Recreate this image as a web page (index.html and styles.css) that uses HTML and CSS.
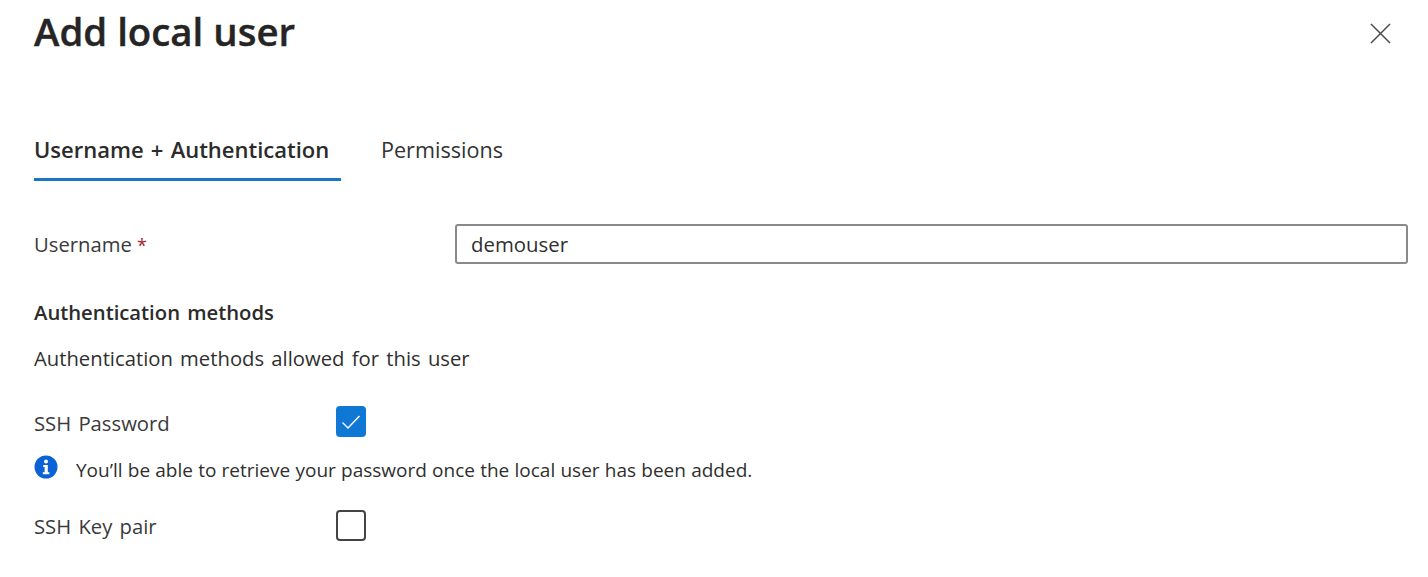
FILE: index.html
```html
<!DOCTYPE html>
<html lang="en">
<head>
<meta charset="utf-8">
<title>Add local user</title>
<link rel="stylesheet" href="styles.css">
</head>
<body>
<main class="panel">
  <header class="head">
    <h1 class="title">Add local user</h1>
    <button class="close" aria-label="Close">
      <svg width="21" height="21" viewBox="0 0 21 21"><path d="M1 1 L20 20 M20 1 L1 20" stroke="#4a4a4a" stroke-width="1.5" fill="none"/></svg>
    </button>
  </header>
  <nav class="tabs">
    <span class="tab active">Username + Authentication</span>
    <span class="tab">Permissions</span>
  </nav>
  <div class="field">
    <label class="field-label">Username <span class="req">*</span></label>
    <div class="input">demouser</div>
  </div>
  <h2 class="section">Authentication methods</h2>
  <p class="desc">Authentication methods allowed for this user</p>
  <div class="check-row">
    <span class="check-label">SSH Password</span>
    <span class="box checked">
      <svg width="20" height="16" viewBox="0 0 20 16"><path d="M1.5 8.5 L7 14 L18.5 2" stroke="#fff" stroke-width="1.4" fill="none"/></svg>
    </span>
  </div>
  <div class="info">
    <svg class="info-icon" width="24" height="24" viewBox="0 0 24 24"><circle cx="12" cy="12" r="11.5" fill="#0b62d6"/><circle cx="12" cy="6.6" r="2" fill="#fff"/><path d="M9.2 10h4.6v7.2h1.6v2H8.8v-2h1.8v-5.2H9.2z" fill="#fff"/></svg>
    <span class="info-text">You’ll be able to retrieve your password once the local user has been added.</span>
  </div>
  <div class="check-row second">
    <span class="check-label">SSH Key pair</span>
    <span class="box"></span>
  </div>
</main>
</body>
</html>
```
FILE: styles.css
```css
* { box-sizing: border-box; }
html, body { margin: 0; padding: 0; background: #fff; }
body { width: 1428px; height: 577px; overflow: hidden; font-family: "Open Sans", "Noto Sans", sans-serif; color: #2f2f2f; word-spacing: 2px; }
.panel { padding: 0 20px 0 34px; display: flex; flex-direction: column; }
.head { display: flex; justify-content: space-between; align-items: flex-start; height: 128px; }
.title { margin: 5px 0 0; font-size: 38.4px; line-height: 53px; font-weight: 600; color: #252525; word-spacing: 0; -webkit-text-stroke: 0.4px #252525; }
.close { margin: 23px 17px 0 0; padding: 0; border: 0; background: none; display: block; width: 21px; height: 21px; }
.tabs { display: flex; gap: 40px; height: 53px; }
.tab { font-size: 21.6px; line-height: 43px; color: #333; word-spacing: 0; }
.tab.active { font-size: 22px; font-weight: 600; border-bottom: 3px solid #1a75c2; width: 307px; height: 53px; line-height: 43px; color: #2b2b2b; word-spacing: 1.5px; }
.field { display: flex; align-items: center; margin-top: 43px; height: 40px; }
.field-label { width: 421px; font-size: 20.25px; color: #3a3a3a; word-spacing: 0; }
.req { color: #a4262c; font-size: 18px; }
.input { flex: 1; height: 40px; border: 2px solid #8a8a8a; border-radius: 3px; padding-left: 14px; font-size: 20.4px; line-height: 37px; color: #2f2f2f; }
.section { margin: 33px 0 0; font-size: 20.25px; line-height: 30px; font-weight: 600; color: #2b2b2b; }
.desc { margin: 16px 0 0; font-size: 20.25px; line-height: 30px; }
.check-row { display: flex; align-items: center; height: 31px; margin-top: 33px; }
.check-label { width: 302px; font-size: 20.25px; line-height: 33px; padding-top: 3px; color: #3a3a3a; }
.box { width: 30px; height: 31px; border: 2px solid #444; border-radius: 4px; display: flex; align-items: center; justify-content: center; }
.box.checked { background: #0f78d4; border: 0; }
.info { display: flex; align-items: flex-start; margin-top: 18px; height: 40px; }
.info-icon { display: block; flex: none; }
.info-text { margin-left: 18px; font-size: 19px; line-height: 30px; word-spacing: 0.3px; }
.check-row.second { margin-top: 15px; }
.check-row.second .check-label { padding-top: 2px; }
```
